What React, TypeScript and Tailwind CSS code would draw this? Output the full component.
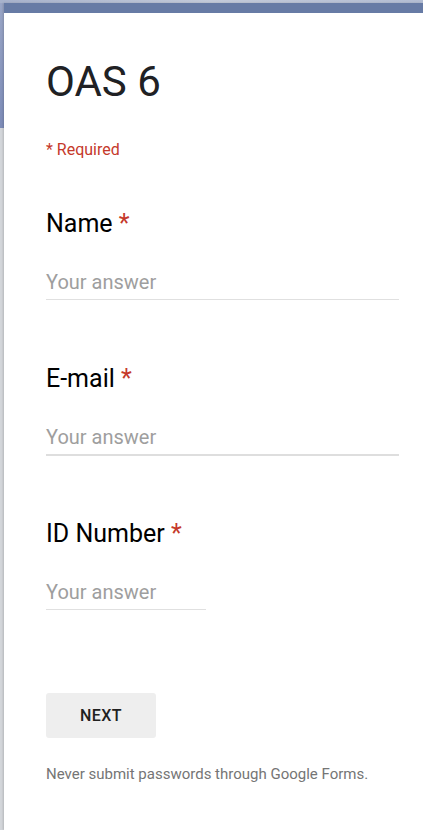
import React from 'react';

const fields = [
    { label: 'Name', lineWidth: 'w-[353px]', thick: false },
    { label: 'E-mail', lineWidth: 'w-[353px]', thick: true },
    { label: 'ID Number', lineWidth: 'w-[160px]', thick: false },
];

const App: React.FC = () => {
    return (
        <div
            className="w-[423px] h-[830px] flex flex-col bg-[#d6d9de] overflow-hidden"
            style={{ fontFamily: 'Roboto, "Liberation Sans", sans-serif' }}
        >
            {/* blurred page background strip */}
            <div className="h-[3px] w-full bg-gradient-to-r from-[#a7b2cc] via-[#c3cad9] to-[#b3bdd3]" />

            <div className="flex flex-1">
                {/* left background edge */}
                <div className="w-[4px] flex flex-col">
                    <div className="h-[125px] bg-gradient-to-b from-[#9aa6c6] to-[#7d8cb8]" />
                    <div className="flex-1 bg-[#d3d6da]" />
                </div>

                {/* form card */}
                <div className="flex-1 flex flex-col bg-white shadow-[-1px_0_2px_rgba(0,0,0,0.15)]">
                    <div className="h-[10px] bg-[#677ba5]" />

                    <div className="pl-[42px] pr-[24px]">
                        {/* Title */}
                        <div className="mt-[45px] text-[42px] leading-[48px] text-[#202124]">OAS 6</div>
                        <div className="mt-[32px] text-[16px] leading-[24px] text-[#c5392b]">* Required</div>

                        {/* Questions */}
                        <div className="mt-[46px] flex flex-col">
                            {fields.map((f, i) => (
                                <div key={f.label} className={i > 0 ? 'mt-[63px]' : ''}>
                                    <div className="text-[25px] leading-[32px] text-black">
                                        {f.label} <span className="text-[#c5392b]">*</span>
                                    </div>
                                    <div
                                        className={`mt-[28px] ${f.lineWidth} ${
                                            f.thick ? 'border-b-2 border-[#dedede] -mb-[1px]' : 'border-b border-[#e0e0e0]'
                                        } pb-[3px]`}
                                    >
                                        <div className="text-[20px] leading-[28px] text-[#9e9e9e]">Your answer</div>
                                    </div>
                                </div>
                            ))}
                        </div>

                        {/* Next */}
                        <button className="mt-[83px] w-[110px] h-[45px] rounded-[3px] bg-[#eeeeee] text-[16px] font-medium tracking-[0.5px] text-[#212121]">
                            NEXT
                        </button>

                        <div className="mt-[26px] text-[15px] leading-[20px] text-[#757575]">
                            Never submit passwords through Google Forms.
                        </div>
                    </div>
                </div>
            </div>
        </div>
    );
};

export default App;
